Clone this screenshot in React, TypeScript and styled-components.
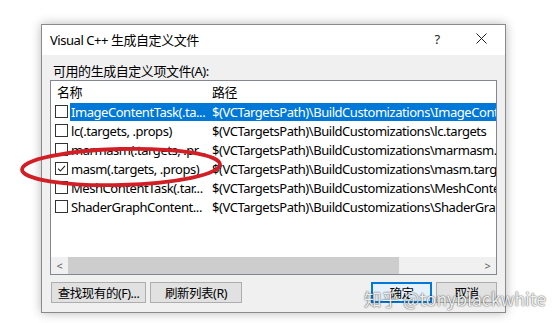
import styled, { createGlobalStyle } from "styled-components"

const GlobalStyle = createGlobalStyle`
    html, body {
        margin: 0;
        padding: 0;
        background: #ffffff;
    }
    body {
        font-family: "Noto Sans", "Noto Sans CJK SC", sans-serif;
        font-size: 13px;
        letter-spacing: -0.45px;
        color: #000;
    }
`

const Page = styled.div`
    position: relative;
    width: 553px;
    height: 323px;
    padding: 24px 0 0 41px;
    box-sizing: border-box;
    overflow: hidden;
`
const Dialog = styled.div`
    width: 465px;
    height: 289px;
    box-sizing: border-box;
    border: 1px solid #8a8a8a;
    box-shadow: 0 0 10px rgba(0, 0, 0, 0.28);
    display: flex;
    flex-direction: column;
    background: #f0f0f0;
`
const TitleBar = styled.div`
    height: 30px;
    background: #ffffff;
    display: flex;
    align-items: center;
    padding-left: 8px;
    padding-bottom: 2px;
    box-sizing: border-box;
`
const Title = styled.span`
    flex: 1;
`
const TitleButton = styled.span`
    width: 44px;
    text-align: center;
    color: #222;
`
const Body = styled.div`
    flex: 1;
    display: flex;
    flex-direction: column;
    padding: 8px 8px 0 8px;
`
const Label = styled.div`
    padding-left: 3px;
    height: 17px;
    line-height: 17px;
`
const ListBox = styled.div`
    height: 195px;
    box-sizing: border-box;
    border: 1px solid #828790;
    background: #ffffff;
    display: flex;
    flex-direction: column;
    overflow: hidden;
`
const Header = styled.div`
    display: grid;
    grid-template-columns: 155px 1fr;
    height: 21px;
    align-items: center;
    padding-left: 6px;
`
const Rows = styled.div`
    flex: 1;
`
const Row = styled.div`
    display: flex;
    align-items: center;
    height: 19px;
    padding-left: 4px;
    white-space: nowrap;
`
const CheckBox = styled.span`
    width: 11px;
    height: 11px;
    border: 1px solid #333;
    background: #fff;
    flex: none;
    margin-right: 2px;
    display: flex;
    align-items: center;
    justify-content: center;
`
const RowBody = styled.div<{ $selected?: boolean }>`
    flex: 1;
    display: grid;
    grid-template-columns: 141px 1fr;
    height: 18px;
    align-items: center;
    background: ${p => (p.$selected ? "#0078d7" : "transparent")};
    color: ${p => (p.$selected ? "#ffffff" : "#000000")};
    padding-left: 1px;
    overflow: hidden;
`
const Cell = styled.span`
    overflow: hidden;
    white-space: nowrap;
`
const ScrollBar = styled.div`
    height: 17px;
    display: flex;
    align-items: center;
    background: #f0f0f0;
`
const Arrow = styled.span`
    width: 17px;
    text-align: center;
    font-size: 11px;
    color: #606060;
    flex: none;
`
const Track = styled.div`
    flex: 1;
    height: 17px;
    display: flex;
`
const Thumb = styled.div`
    height: 100%;
    background: #cdcdcd;
`
const ButtonRow = styled.div`
    display: flex;
    align-items: center;
    margin-top: 7px;
    padding-left: 1px;
    gap: 4px;
`
const Spacer = styled.div`
    flex: 1;
`
const Button = styled.div<{ $width: number; $default?: boolean }>`
    width: ${p => p.$width}px;
    height: 21px;
    box-sizing: border-box;
    border: 1px solid ${p => (p.$default ? "#0078d7" : "#adadad")};
    box-shadow: ${p => (p.$default ? "inset 0 0 0 1px #0078d7" : "none")};
    background: ${p => (p.$default ? "#e5f1fb" : "#e1e1e1")};
    display: flex;
    align-items: center;
    justify-content: center;
    font-size: 12.5px;
`
const Ellipse = styled.svg`
    position: absolute;
    left: 0;
    top: 0;
    pointer-events: none;
`
const Watermark = styled.div`
    position: absolute;
    left: 364px;
    top: 286px;
    font-family: "Noto Sans CJK SC", "Noto Sans", sans-serif;
    font-size: 17.5px;
    letter-spacing: 0;
    color: rgba(255, 255, 255, 0.92);
    text-shadow: 0 0 2px rgba(0, 0, 0, 0.55), 0 0 1px rgba(0, 0, 0, 0.5);
`

const items = [
    { name: "ImageContentTask(.ta...", file: "ImageContentTask.targets", selected: true },
    { name: "lc(.targets, .props)", file: "lc.targets" },
    { name: "marmasm(.targets, .pr...", file: "marmasm.targets" },
    { name: "masm(.targets, .props)", file: "masm.targets", checked: true },
    { name: "MeshContentTask(.tar...", file: "MeshContentTask.targets" },
    { name: "ShaderGraphContent...", file: "ShaderGraphContentTask.targets" },
]

const Check = () => (
    <svg width="9" height="9" viewBox="0 0 9 9">
        <path d="M1 4.6 L3.4 7 L8 1.8" fill="none" stroke="#222" strokeWidth="1.1" />
    </svg>
)

const App: React.FC = () => {
    return (
        <Page>
            <GlobalStyle />
            <Dialog>
                <TitleBar>
                    <Title>Visual C++ 生成自定义文件</Title>
                    <TitleButton>?</TitleButton>
                    <TitleButton style={{ marginRight: 2 }}>
                        <svg width="11" height="11" viewBox="0 0 11 11">
                            <path d="M0.5 0.5 L10.5 10.5 M10.5 0.5 L0.5 10.5" stroke="#222" strokeWidth="1" />
                        </svg>
                    </TitleButton>
                </TitleBar>
                <Body>
                    <Label>可用的生成自定义项文件(A):</Label>
                    <ListBox>
                        <Header>
                            <span>名称</span>
                            <span>路径</span>
                        </Header>
                        <Rows>
                            {items.map(item => (
                                <Row key={item.file}>
                                    <CheckBox>{item.checked && <Check />}</CheckBox>
                                    <RowBody $selected={item.selected}>
                                        <Cell>{item.name}</Cell>
                                        <Cell>$(VCTargetsPath)\BuildCustomizations\{item.file}</Cell>
                                    </RowBody>
                                </Row>
                            ))}
                        </Rows>
                        <ScrollBar>
                            <Arrow>&lt;</Arrow>
                            <Track>
                                <Thumb style={{ width: 331 }} />
                            </Track>
                            <Arrow>&gt;</Arrow>
                        </ScrollBar>
                    </ListBox>
                    <ButtonRow>
                        <Button $width={95}>查找现有的(F)...</Button>
                        <Button $width={92}>刷新列表(R)</Button>
                        <Spacer />
                        <Button $width={61} $default>确定</Button>
                        <Button $width={61}>取消</Button>
                    </ButtonRow>
                </Body>
            </Dialog>
            <Ellipse width="553" height="323">
                <ellipse cx="121" cy="167" rx="99" ry="18" fill="none" stroke="#d21f26" strokeWidth="3.8" transform="rotate(-1.5 121 167)" />
            </Ellipse>
            <Watermark>知乎 @tonyblackwhite</Watermark>
        </Page>
    )
}

export default App
